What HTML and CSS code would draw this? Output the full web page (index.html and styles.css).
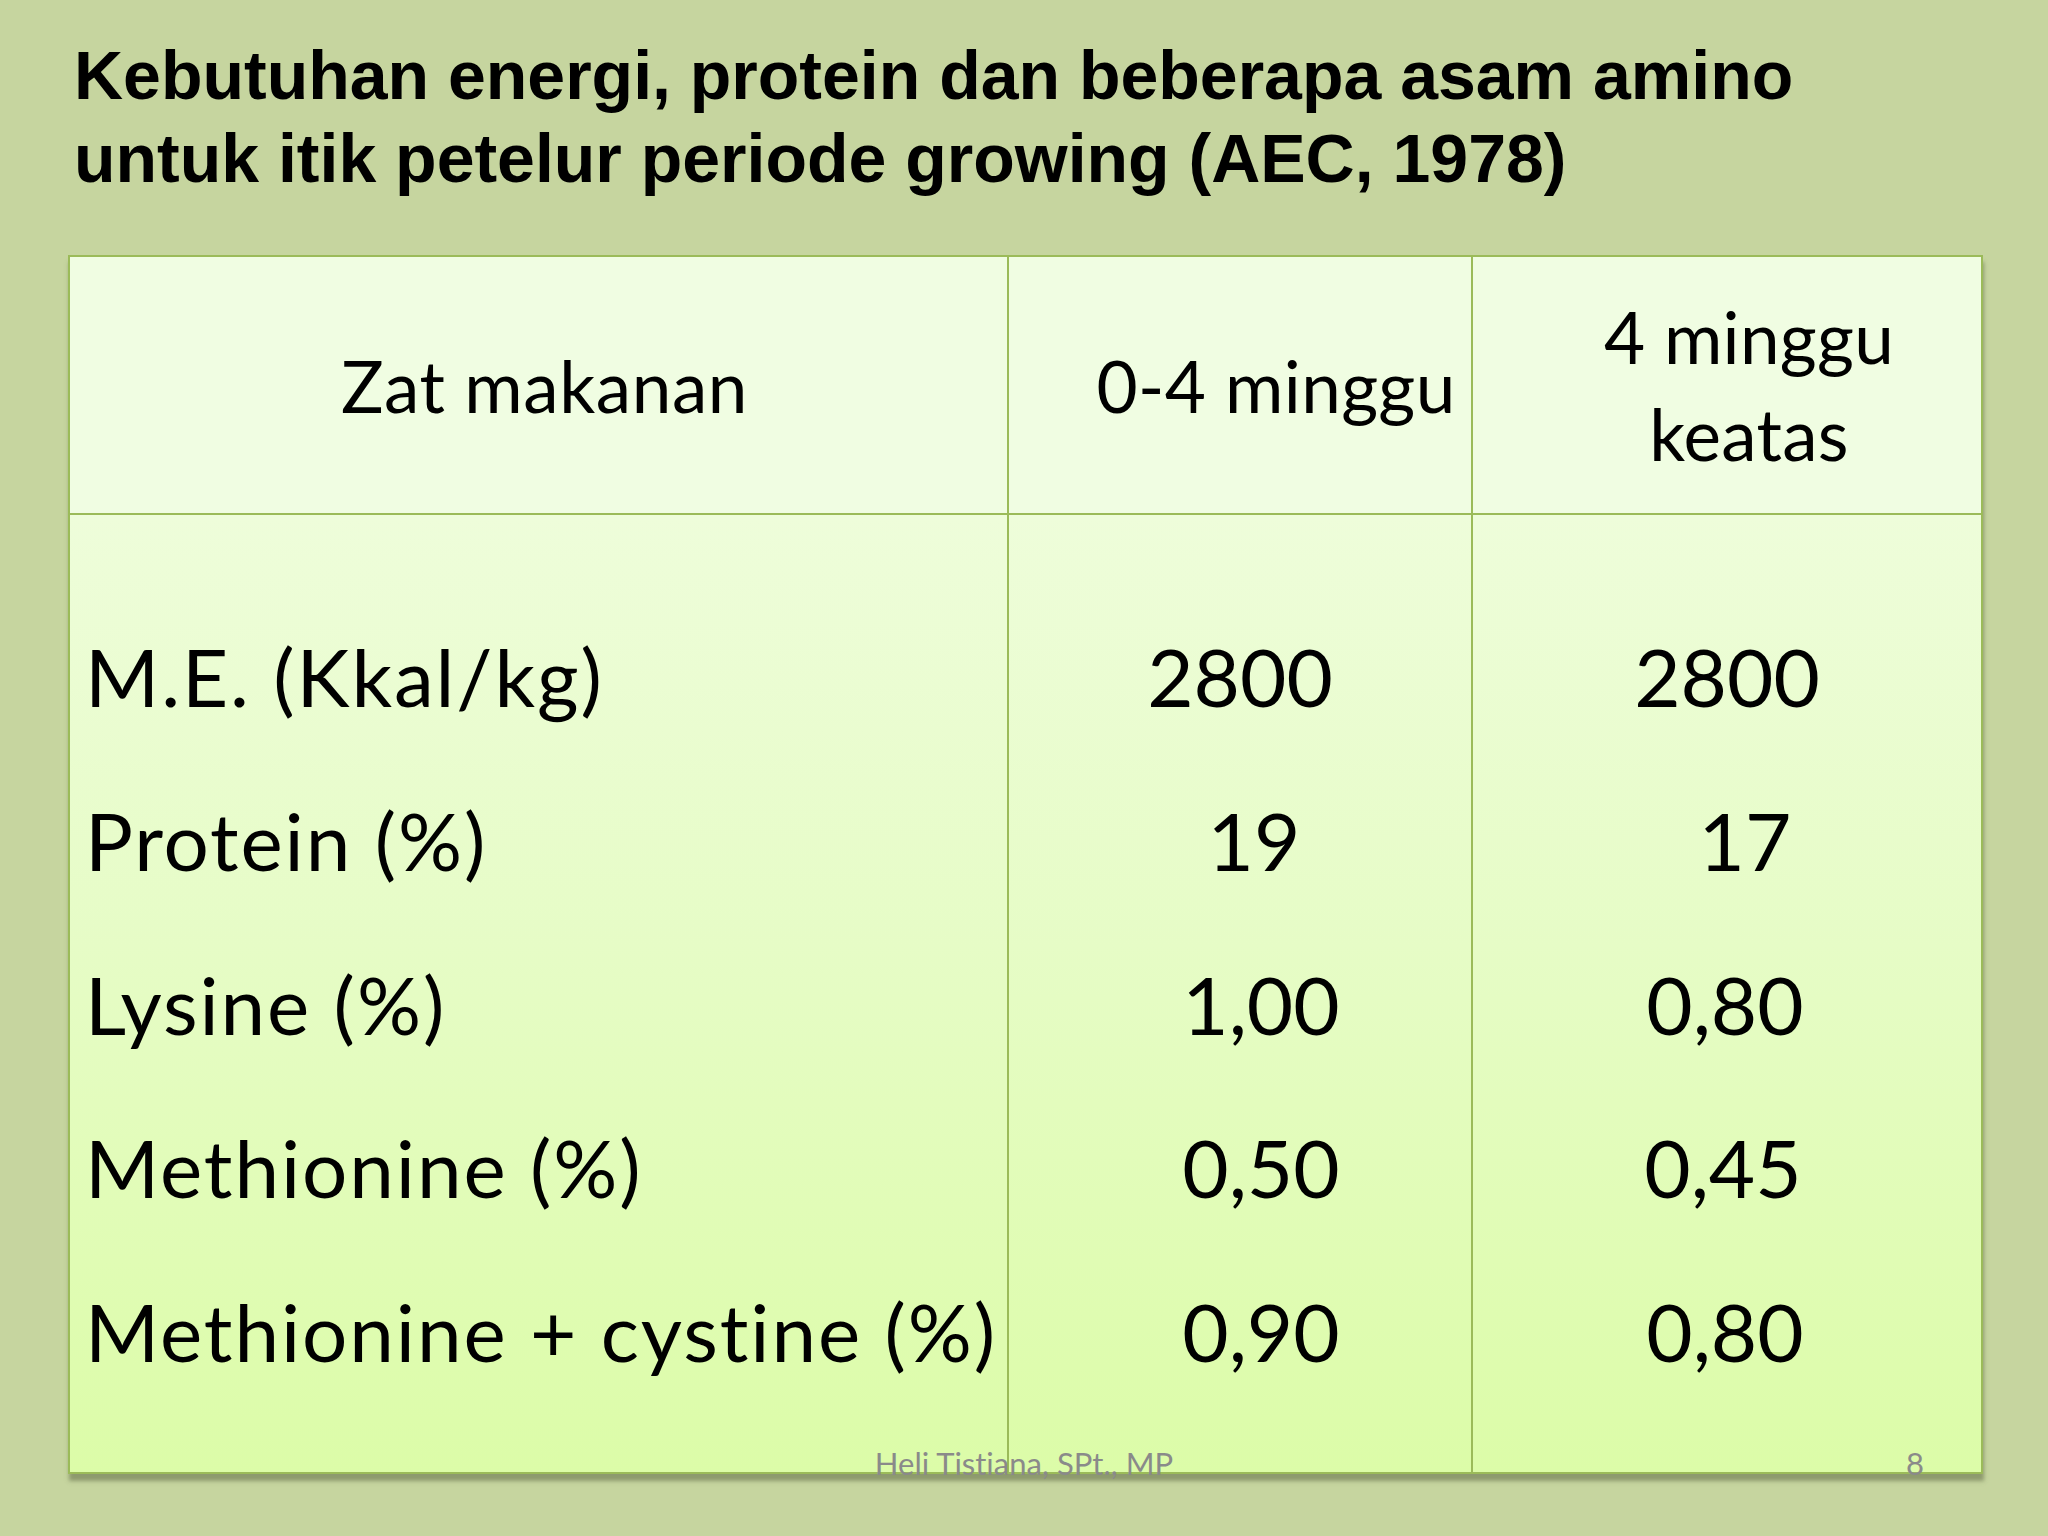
FILE: index.html
```html
<!DOCTYPE html>
<html lang="id">
<head>
<meta charset="utf-8">
<title>Kebutuhan energi itik petelur</title>
<link rel="stylesheet" href="styles.css">
</head>
<body>
<div class="slide">
  <h1 class="title">Kebutuhan energi, protein dan beberapa asam amino<br>untuk itik petelur periode growing (AEC, 1978)</h1>
  <table class="nutri">
    <colgroup>
      <col class="c1">
      <col class="c2">
      <col class="c3">
    </colgroup>
    <thead>
      <tr>
        <th class="h1">Zat makanan</th>
        <th class="h2">0-4 minggu</th>
        <th class="h3">4 minggu<br>keatas</th>
      </tr>
    </thead>
    <tbody>
      <tr>
        <td class="names">
          <div class="line">M.E. (Kkal/kg)</div>
          <div class="line">Protein (%)</div>
          <div class="line">Lysine (%)</div>
          <div class="line">Methionine (%)</div>
          <div class="line">Methionine + cystine (%)</div>
        </td>
        <td class="vals">
          <div class="line">2800</div>
          <div class="line sh14">19</div>
          <div class="line sh21">1,00</div>
          <div class="line sh21">0,50</div>
          <div class="line sh21">0,90</div>
        </td>
        <td class="vals">
          <div class="line">2800</div>
          <div class="line sh18">17</div>
          <div class="line shm2">0,80</div>
          <div class="line shm4">0,45</div>
          <div class="line shm2">0,80</div>
        </td>
      </tr>
    </tbody>
  </table>
  <div class="footer">Heli Tistiana, SPt., MP</div>
  <div class="pagenum">8</div>
</div>
</body>
</html>
```
FILE: styles.css
```css
html, body {
  margin: 0;
  padding: 0;
}

body {
  background: #c6d59f;
  font-variant-ligatures: none;
}

.slide {
  position: relative;
  width: 2048px;
  height: 1536px;
  overflow: hidden;
  background: #c6d59f;
  display: flex;
  flex-direction: column;
}

.title {
  margin: 34px 0 0 74px;
  font-family: "Liberation Sans", Arial, sans-serif;
  font-weight: bold;
  font-size: 68px;
  line-height: 83px;
  color: #000;
  white-space: nowrap;
}

.nutri {
  margin: 55px 0 0 68px;
  width: 1913px;
  border-collapse: collapse;
  table-layout: fixed;
  font-family: Lato, "Open Sans", sans-serif;
  font-variant-ligatures: none;
  color: #000;
  box-shadow: 1px 7px 4px rgba(95, 105, 70, 0.55);
}

.c1 { width: 939px; }
.c2 { width: 464px; }
.c3 { width: 510px; }

.nutri th,
.nutri td {
  border: 2px solid #9bbb59;
  padding: 0;
}

.nutri thead th {
  height: 256px;
  background: #f0fde2;
  font-weight: normal;
  font-size: 71px;
  line-height: 97px;
  text-align: center;
  vertical-align: middle;
  white-space: nowrap;
}

.nutri .h1 { padding-left: 12px; letter-spacing: 0.6px; }
.nutri .h2 { padding-left: 72px; letter-spacing: 0.4px; }
.nutri .h3 { padding-left: 44px; letter-spacing: 0.3px; }

.nutri tbody td {
  height: 877px;
  vertical-align: top;
  padding-top: 80px;
  font-size: 80px;
  line-height: 163.75px;
  white-space: nowrap;
  background: linear-gradient(to bottom, #eefdda 0%, #e6fcc6 45%, #dcfca8 100%);
}

.nutri .names {
  padding-left: 15px;
  text-align: left;
  letter-spacing: 1.9px;
}

.nutri .vals {
  text-align: center;
}

.sh14 { padding-left: 28px; }
.sh18 { padding-left: 36px; }
.sh21 { padding-left: 42px; }
.shm2 { padding-right: 4px; }
.shm4 { padding-right: 8px; }

.footer {
  position: absolute;
  left: 0;
  right: 0;
  top: 1448px;
  text-align: center;
  font-family: Lato, "Open Sans", sans-serif;
  font-size: 31px;
  line-height: 31px;
  color: #8a8a8a;
}

.pagenum {
  position: absolute;
  right: 124px;
  top: 1448px;
  font-family: Lato, "Open Sans", sans-serif;
  font-size: 31px;
  line-height: 31px;
  color: #8a8a8a;
}
```
